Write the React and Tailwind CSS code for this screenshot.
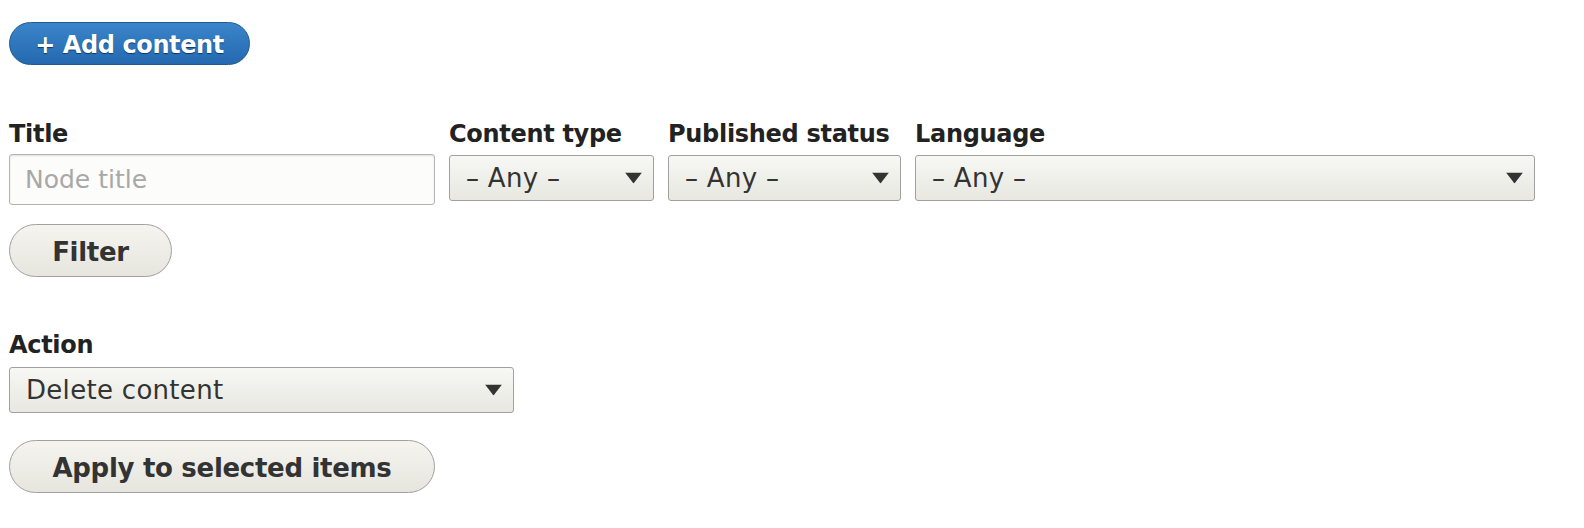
import React from 'react';

const Arrow = () => (
  <svg
    className="pointer-events-none absolute right-[12px] top-1/2 -translate-y-1/2"
    width="17"
    height="11"
    viewBox="0 0 17 11"
  >
    <polygon points="0,0 17,0 8.5,11" fill="#333" />
  </svg>
);

const Select = ({ width, options }) => (
  <div className={`relative ${width}`}>
    <select
      defaultValue={options[0]}
      className="h-[46px] w-full appearance-none rounded-[3px] border border-[#a0a0a0] bg-gradient-to-b from-[#f7f7f4] to-[#e8e8e1] pl-[16px] pr-10 text-[26px] tracking-[0.3px] text-[#333] focus:outline-none"
    >
      {options.map((o) => (
        <option key={o}>{o}</option>
      ))}
    </select>
    <Arrow />
  </div>
);

const Label = ({ children }) => (
  <label className="block text-[24px] leading-[28px] font-bold tracking-[-0.3px] text-[#222]">
    {children}
  </label>
);

const App = () => {
  return (
    <div className="min-h-[528px] bg-white pl-[9px] pt-[22px] font-['DejaVu_Sans',sans-serif]">
      {/* Primary action */}
      <a
        href="#"
        className="flex h-[43px] w-[241px] items-center justify-center rounded-full border border-[#1e5a8f] bg-gradient-to-b from-[#3a85ca] to-[#2569b0] pt-[3px] text-[24px] font-bold tracking-[-0.4px] text-white [text-shadow:0_1px_1px_#0d3a66]"
      >
        + Add content
      </a>

      {/* Exposed filters */}
      <div className="mt-[55px] flex items-start gap-[14px]">
        <div>
          <Label>Title</Label>
          <input
            placeholder="Node title"
            className="mt-[6px] h-[51px] w-[426px] rounded-[3px] border border-[#b4b4b4] bg-[#fcfcfa] px-[15px] text-[25px] text-[#333] shadow-[inset_0_1px_2px_rgba(0,0,0,0.12)] placeholder:text-[#a8a8a8] focus:outline-none"
          />
        </div>
        <div>
          <Label>Content type</Label>
          <div className="mt-[7px]">
            <Select width="w-[205px]" options={['– Any –', 'Article', 'Basic page']} />
          </div>
        </div>
        <div>
          <Label>Published status</Label>
          <div className="mt-[7px]">
            <Select width="w-[233px]" options={['– Any –', 'Published', 'Unpublished']} />
          </div>
        </div>
        <div>
          <Label>Language</Label>
          <div className="mt-[7px]">
            <Select width="w-[620px]" options={['– Any –', 'English']} />
          </div>
        </div>
      </div>

      <button className="mt-[19px] h-[53px] w-[163px] rounded-full border border-[#a0a0a0] bg-gradient-to-b from-[#f5f4ef] to-[#e6e5de] pt-[3px] text-[26px] font-bold tracking-[-0.3px] text-[#333]">
        Filter
      </button>

      {/* Bulk form */}
      <div className="mt-[54px]">
        <Label>Action</Label>
        <div className="mt-[8px]">
          <Select width="w-[505px]" options={['Delete content', 'Publish content', 'Unpublish content']} />
        </div>
      </div>

      <button className="mt-[27px] h-[53px] w-[426px] rounded-full border border-[#a0a0a0] bg-gradient-to-b from-[#f5f4ef] to-[#e6e5de] pt-[3px] text-[26px] font-bold tracking-[-0.3px] text-[#333]">
        Apply to selected items
      </button>
    </div>
  );
};

export default App;
